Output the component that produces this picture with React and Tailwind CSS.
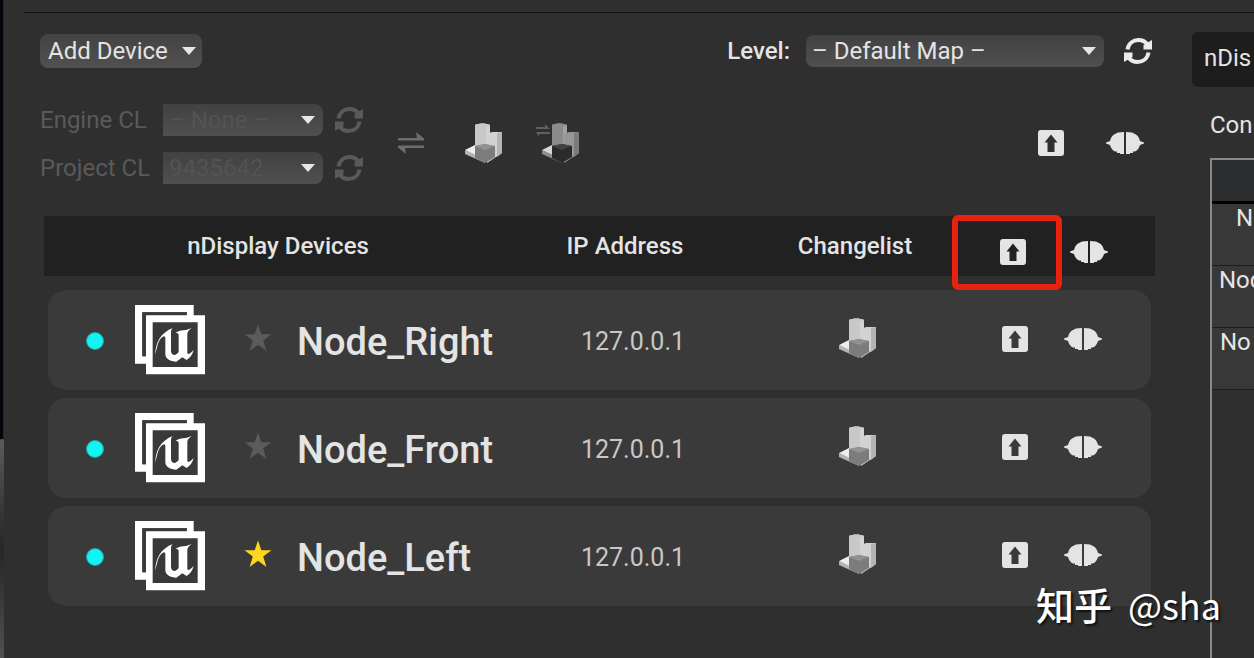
import React from 'react';

const devices = [
  { id: 1, name: 'Node_Right', ip: '127.0.0.1', primary: false },
  { id: 2, name: 'Node_Front', ip: '127.0.0.1', primary: false },
  { id: 3, name: 'Node_Left', ip: '127.0.0.1', primary: true },
];

const clusterNodes = [
  { label: 'N', indent: 'pl-6' },
  { label: 'Nod', indent: 'pl-[7px]' },
  { label: 'No', indent: 'pl-2' },
];

function RefreshIcon() {
  return (
    <svg width="30" height="28" viewBox="-1 -1 30 28" aria-hidden="true">
      <g fill="none" stroke="currentColor" strokeWidth="4">
        <path d="M3.5 11.5C4.5 5.500 9 2 14.500 2c3.800 0 6.800 1.500 9 4.500" />
        <path d="M24.500 14.500C23.500 20.500 19 24 13.500 24c-3.800 0-6.800-1.500-9-4.500" />
      </g>
      <path d="M28 2v9.500h-8.500v-4.500z M0 24v-9.500h8.500v4.500z" fill="currentColor" />
    </svg>
  );
}

function UploadIcon() {
  return (
    <svg width="26" height="26" viewBox="0 0 26 26" aria-hidden="true">
      <path
        fillRule="evenodd"
        fill="currentColor"
        d="M3 0h20a3 3 0 0 1 3 3v20a3 3 0 0 1-3 3H3a3 3 0 0 1-3-3V3a3 3 0 0 1 3-3zM13 4.500L6.500 12.500H9.500V22h7v-9.500h3z"
      />
    </svg>
  );
}

function PlugIcon() {
  return (
    <svg width="38" height="22" viewBox="0 0 38 22" aria-hidden="true" fill="currentColor">
      <path d="M18 0v22h-4v-1h-3v-1.500H9C6.500 18.500 5 16 4 13L0 11.500v-1L4 9C5 5.500 6.500 3 9 2l3-1.500z" />
      <path d="M20 0v22h4v-1h3v-1.500h2c2.500-1 4-3.500 5-6.500l4-1.500v-1L34 9c-1-3.500-2.500-6-5-7l-3-1.500z" />
    </svg>
  );
}

function SwapIcon() {
  return (
    <svg width="28" height="22" viewBox="0 0 28 22" aria-hidden="true" fill="currentColor">
      <path d="M1 6h19l-1-6 8 6.500V8.500H1z" />
      <path d="M27 16H8l1 6-8-6.500V13.500h26z" />
    </svg>
  );
}

function BuildIcon({ dark }) {
  return (
    <svg width="38" height="40" viewBox="0 0 38 40" aria-hidden="true" className="overflow-visible">
      <path d="M0 27l10-5 10 3v13z" fill={dark ? '#d6d6d6' : '#eeeeee'} />
      <path d="M0 27l20 9v4L0 31z" fill={dark ? '#8d8d8d' : '#b4b4b4'} />
      <path d="M10 2c4-2 11-2 15 0v26H10z" fill={dark ? '#a2a2a2' : '#d4d4d4'} />
      <path d="M10 2c4-2 11-2 15 0l-4 2v24H10z" fill={dark ? '#8b8b8b' : '#c8c8c8'} />
      <path d="M22 11l5-2h10v21l-15 10z" fill={dark ? '#979797' : '#d2d2d2'} />
      <path d="M32 10l5-1v21l-5 4z" fill={dark ? '#7b7b7b' : '#b4b4b4'} />
      <path d="M10 23l10-2 10 2v11l-10 6-10-5z" fill={dark ? '#2b2b2b' : '#7c7c7c'} />
      <path d="M10 23l10-2 10 2-10 4z" fill={dark ? '#424242' : '#929292'} />
      {dark && (
        <g fill="#606060">
          <path d="M-6 4h9V1l5 5H-6z" />
          <path d="M8 9H-6l3 5v-3H8z" />
        </g>
      )}
    </svg>
  );
}

function EngineLogo() {
  return (
    <svg width="70" height="70" viewBox="44 46 210 210" aria-hidden="true">
      <path d="M44 46h176v176H44z M66 68v132h132V68z" fillRule="evenodd" fill="#fff" />
      <path d="M66 68h134v8H77v124H66z" fill="#3a3a3a" />
      <path d="M77 77h177v177H77z" fill="#fff" />
      <path d="M97 98h135v134H97z" fill="#39393a" />
      <path
        d="M105 195C105 160 120 130 157 115C152 120 152 125 152 130V182C152 191 156 197 163 196C168 195 172 191 175 187V138C175 130 171 129 166 130C176 122 184 123 190 122C198 121 206 118 214 115C204 123 201 127 201 134V188C201 196 207 195 220 181C216 196 208 205 199 211L186 203L168 216C150 216 135 207 135 193V146C135 138 130 137 122 146C112 158 110 174 105 195Z"
        fill="#fff"
      />
    </svg>
  );
}

function StarIcon({ active }) {
  return (
    <svg
      width="28"
      height="28"
      viewBox="0 0 28 28"
      aria-hidden="true"
      className={active ? 'text-[#ffd51e]' : 'text-[#5b5b5b]'}
    >
      <path
        d="M14 0.500l3.300 9.800h10.200l-8.300 6.200 3.200 10.500L14 20.700 5.600 27l3.200-10.500L0.500 10.300h10.200z"
        fill="currentColor"
      />
    </svg>
  );
}

function DropArrow() {
  return (
    <svg width="14" height="8" viewBox="0 0 14 8" aria-hidden="true" fill="#e6e6e6">
      <path d="M0 0h14L7 8z" />
    </svg>
  );
}

function Dropdown({ id, value, disabled, shape }) {
  return (
    <div className="relative">
      <select
        id={id}
        disabled={disabled}
        className={`block h-8 w-full appearance-none bg-linear-to-b from-[#414141] to-[#505050] pl-1.5 leading-8 text-[#e4e4e4] opacity-100 disabled:text-[#535353] ${shape}`}
      >
        <option>{value}</option>
      </select>
      <span className="pointer-events-none absolute inset-y-0 right-2 flex items-center">
        <DropArrow />
      </span>
    </div>
  );
}

function IconButton({ label, className = '', children }) {
  return (
    <button type="button" aria-label={label} className={`flex items-center justify-center ${className}`}>
      {children}
    </button>
  );
}

function Toolbar() {
  return (
    <>
      {/* Device menu and level selection */}
      <div className="flex h-[34px] items-center justify-between">
        <button
          type="button"
          className="flex h-[34px] w-[162px] items-center justify-between rounded-lg bg-linear-to-b from-[#434343] to-[#505050] pr-1.5 pl-2"
        >
          Add Device
          <DropArrow />
        </button>
        <div className="flex items-center gap-4">
          <label htmlFor="level" className="font-medium">Level:</label>
          <div className="w-[298px]">
            <Dropdown id="level" value="– Default Map –" shape="rounded-lg" />
          </div>
          <IconButton label="Refresh levels" className="w-9 text-[#ebebeb]">
            <RefreshIcon />
          </IconButton>
        </div>
      </div>

      {/* Changelists and global actions */}
      <div className="mt-9 flex items-center">
        <div className="grid grid-cols-[123px_160px_52px] items-center gap-y-4 text-[#5a5a5a]">
          <label htmlFor="engine-cl">Engine CL</label>
          <Dropdown id="engine-cl" value="– None –" disabled shape="rounded-r-lg" />
          <IconButton label="Refresh engine changelists"><RefreshIcon /></IconButton>
          <label htmlFor="project-cl">Project CL</label>
          <Dropdown id="project-cl" value="9435642" disabled shape="rounded-r-lg" />
          <IconButton label="Refresh project changelists"><RefreshIcon /></IconButton>
        </div>
        <div className="flex flex-1 items-center pb-0.5">
          <IconButton label="Sync" className="w-[72px] text-[#6d6d6d]"><SwapIcon /></IconButton>
          <IconButton label="Build" className="w-[74px]"><BuildIcon /></IconButton>
          <IconButton label="Sync and build" className="w-20"><BuildIcon dark /></IconButton>
          <div className="ml-auto flex gap-3">
            <IconButton label="Start all" className="w-[62px]"><UploadIcon /></IconButton>
            <IconButton label="Connect all" className="w-[62px]"><PlugIcon /></IconButton>
          </div>
        </div>
      </div>
    </>
  );
}

function DeviceTable() {
  const head = 'h-[70px] border-b-10 border-transparent bg-[#212121] bg-clip-padding p-0 font-medium';
  const cell = 'h-[108px] border-y-4 border-transparent bg-[#3a3a3a] bg-clip-padding p-0';

  return (
    <table className="mt-8 w-full table-fixed border-separate border-spacing-0">
      <colgroup>
        <col className="w-1" />
        <col className="w-[87px]" />
        <col className="w-[109px]" />
        <col className="w-[53px]" />
        <col />
        <col className="w-[234px]" />
        <col className="w-[226px]" />
        <col className="w-[90px]" />
        <col className="w-[93px]" />
        <col className="w-1" />
      </colgroup>
      <thead>
        <tr>
          <td className={head} />
          <th colSpan={4} scope="col" className={head}>nDisplay Devices</th>
          <th scope="col" className={head}>IP Address</th>
          <th scope="col" className={head}>Changelist</th>
          <th className={`${head} relative`}>
            <IconButton label="Start nDisplay devices" className="w-full pt-3"><UploadIcon /></IconButton>
            {/* Highlight frame */}
            <span className="pointer-events-none absolute -top-px -right-1 -bottom-3.5 -left-4 rounded-md border-6 border-[#e8220f]" />
          </th>
          <th className={head}>
            <IconButton label="Connect nDisplay devices" className="w-full pt-3 pr-8"><PlugIcon /></IconButton>
          </th>
          <td className={head} />
        </tr>
      </thead>
      <tbody>
        {devices.map(device => (
          <tr key={device.id}>
            <td />
            <td className={`${cell} rounded-l-[20px] pt-0.5 pl-[38px]`}>
              <span className="block size-[18px] rounded-full border border-[#2b9c9c] bg-[#12f4f4]" />
            </td>
            <td className={cell}><EngineLogo /></td>
            <td className={`${cell} pb-1`}><StarIcon active={device.primary} /></td>
            <td className={`${cell} pt-1 text-[38px] font-medium`}>{device.name}</td>
            <td className={`${cell} pt-1 pl-4 text-center text-[25px] text-[#c8c8c8]`}>{device.ip}</td>
            <td className={`${cell} pb-1 pl-1.5`}>
              <IconButton label={`Build ${device.name}`} className="w-full"><BuildIcon /></IconButton>
            </td>
            <td className={`${cell} pb-0.5 pl-1`}>
              <IconButton label={`Start ${device.name}`} className="w-full"><UploadIcon /></IconButton>
            </td>
            <td className={`${cell} rounded-r-[20px] pb-0.5`}>
              <IconButton label={`Connect ${device.name}`} className="w-full pr-11"><PlugIcon /></IconButton>
            </td>
            <td />
          </tr>
        ))}
      </tbody>
    </table>
  );
}

function SidePanel() {
  return (
    <aside className="flex w-[62px] shrink-0 flex-col overflow-hidden pt-[19px] whitespace-nowrap">
      <div className="flex h-[55px] items-center rounded-l-md bg-[#1d1d1d] pb-1 pl-3">nDis</div>
      <h2 className="mt-6 pl-[18px] leading-7">Con</h2>
      <div className="mt-[19px] ml-[18px] flex-1 border-t-2 border-l-2 border-[#858a90]">
        <table className="w-full table-fixed border-separate border-spacing-0">
          <thead>
            <tr><td className="h-11 border-b-3 border-black bg-[#2b2d2e] p-0" /></tr>
          </thead>
          <tbody>
            {clusterNodes.map(node => (
              <tr key={node.label}>
                <td className={`h-[62px] border-b border-[#1e1e1e] bg-[#383838] py-0 pr-0 align-top leading-7 ${node.indent}`}>
                  {node.label}
                </td>
              </tr>
            ))}
          </tbody>
        </table>
      </div>
    </aside>
  );
}

export default function App() {
  return (
    <div className="relative flex min-h-screen overflow-hidden bg-[#2f2f2f] font-[Roboto,sans-serif] text-[24px] leading-8 text-[#e4e4e4]">
      {/* Edge of the window behind */}
      <div className="flex w-1 shrink-0 flex-col">
        <div className="grow-2 border-r border-[#25262a] bg-[#05060c]" />
        <div className="grow rounded-t-sm bg-linear-to-b from-[#5a5b5c] via-[#24272b] to-[#505152]" />
      </div>

      <div className="flex min-w-0 flex-1 flex-col">
        <div className="ml-5 h-[13px] border-b border-[#111111]" />
        <div className="flex flex-1">
          <main className="min-w-0 flex-1 pt-[21px] pr-9 pl-9">
            <Toolbar />
            <div className="pr-px pl-1">
              <DeviceTable />
            </div>
          </main>
          <SidePanel />
        </div>
      </div>

      {/* Watermark */}
      <div className="absolute right-[33px] bottom-[30px] flex items-center gap-4 font-['Noto_Sans_CJK_SC',sans-serif] text-[36px] leading-12 text-white [text-shadow:2px_2px_2px_#111]">
        <span className="text-[38px] font-medium">知乎</span>
        <span>@sha</span>
      </div>
    </div>
  );
}
